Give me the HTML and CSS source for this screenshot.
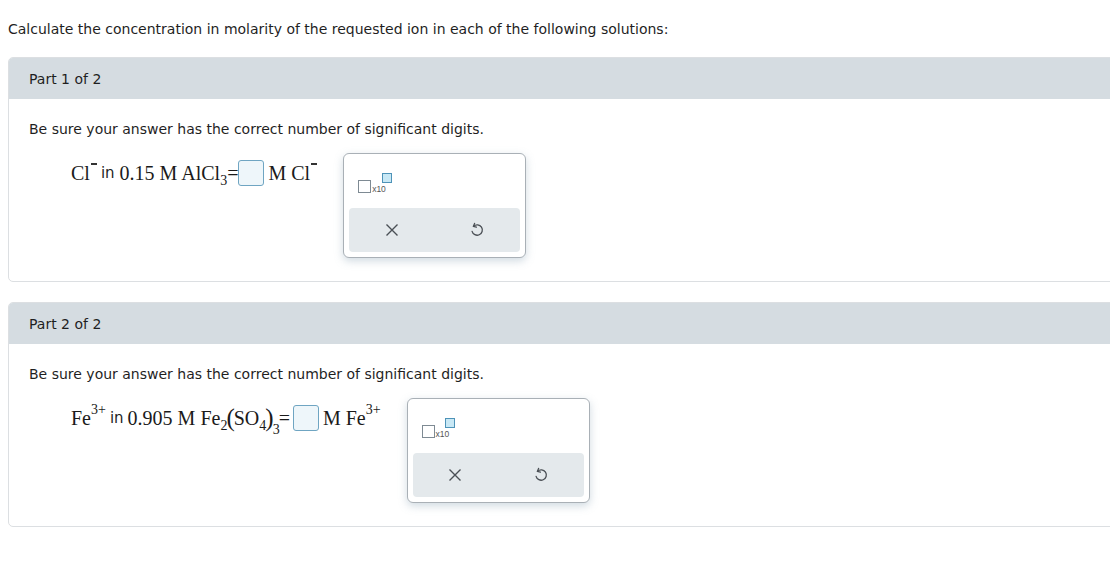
FILE: index.html
```html
<!DOCTYPE html>
<html>
<head>
<meta charset="utf-8">
<link rel="stylesheet" href="styles.css">
</head>
<body>
<p class="intro">Calculate the concentration in molarity of the requested ion in each of the following solutions:</p>

<section class="card">
  <div class="card-head">Part 1 of 2</div>
  <div class="card-body">
    <p class="note">Be sure your answer has the correct number of significant digits.</p>
    <div class="row">
      <div class="eq eq1">
        <span class="ser">Cl<span class="bar"></span></span>
        <span class="in">in</span>
        <span class="ser">0.15 M AlCl<sub>3</sub></span>
        <span class="ser eqs">=</span>
        <span class="box"></span>
        <span class="ser">M Cl<span class="bar"></span></span>
      </div>
      <div class="pop">
        <div class="tool">
          <span class="tsq"></span><span class="tx">x10</span><span class="tsup"></span>
        </div>
        <div class="btns">
          <span class="btn"><svg width="16" height="16" viewBox="0 0 16 16"><path d="M2.5 2.5L13.5 13.5M13.5 2.5L2.5 13.5" stroke="#4a4f55" stroke-width="1.4" fill="none"/></svg></span>
          <span class="btn"><svg width="16" height="16" viewBox="0 0 16 16"><path d="M4.6 4.2A5.2 5.2 0 1 1 3.1 9.3" stroke="#4a4f55" stroke-width="1.3" fill="none" stroke-linecap="round"/><path d="M5.6 1.4L4.3 4.4L7.4 5.2" stroke="#4a4f55" stroke-width="1.3" fill="none" stroke-linecap="round" stroke-linejoin="round"/></svg></span>
        </div>
      </div>
    </div>
  </div>
</section>

<section class="card">
  <div class="card-head">Part 2 of 2</div>
  <div class="card-body">
    <p class="note">Be sure your answer has the correct number of significant digits.</p>
    <div class="row">
      <div class="eq eq2">
        <span class="ser">Fe<sup class="chg">3+</sup></span>
        <span class="in">in</span>
        <span class="ser">0.905 M Fe<sub>2</sub><span class="par">(</span>SO<sub>4</sub><span class="par">)</span><sub class="s3">3</sub></span>
        <span class="ser eqs">=</span>
        <span class="box"></span>
        <span class="ser">M Fe<sup class="chg">3+</sup></span>
      </div>
      <div class="pop">
        <div class="tool">
          <span class="tsq"></span><span class="tx">x10</span><span class="tsup"></span>
        </div>
        <div class="btns">
          <span class="btn"><svg width="16" height="16" viewBox="0 0 16 16"><path d="M2.5 2.5L13.5 13.5M13.5 2.5L2.5 13.5" stroke="#4a4f55" stroke-width="1.4" fill="none"/></svg></span>
          <span class="btn"><svg width="16" height="16" viewBox="0 0 16 16"><path d="M4.6 4.2A5.2 5.2 0 1 1 3.1 9.3" stroke="#4a4f55" stroke-width="1.3" fill="none" stroke-linecap="round"/><path d="M5.6 1.4L4.3 4.4L7.4 5.2" stroke="#4a4f55" stroke-width="1.3" fill="none" stroke-linecap="round" stroke-linejoin="round"/></svg></span>
        </div>
      </div>
    </div>
  </div>
</section>
</body>
</html>
```

FILE: styles.css
```css
html, body {
  margin: 0;
  padding: 0;
  background: #fff;
  overflow: hidden;
}
body {
  padding: 0 0 0 8px;
  font-family: "DejaVu Sans", Verdana, sans-serif;
  font-size: 14px;
  color: #1f1f1f;
}
.intro {
  margin: 0;
  padding-top: 20px;
  height: 37px;
  line-height: 18px;
}
.card {
  margin-right: -20px;
  border: 1px solid #dcdfe2;
  border-radius: 5px;
  margin-bottom: 20px;
  overflow: hidden;
}
.card-head {
  background: #d5dce1;
  height: 41px;
  line-height: 43px;
  padding-left: 20px;
}
.card-body {
  padding: 20px 20px 23px 20px;
}
.note {
  margin: 0;
  line-height: 20px;
}
.row {
  display: flex;
  align-items: flex-start;
  gap: 26px;
  margin-top: 14px;
  padding-left: 42px;
}
.eq {
  display: flex;
  align-items: center;
  margin-top: 7px;
  height: 26px;
  white-space: nowrap;
}
.ser {
  font-family: "Liberation Serif", "Times New Roman", serif;
  font-size: 20px;
  color: #1a1a1a;
}
.in {
  font-size: 15px;
  margin: 0 5px 0 4px;
}
.eq2 .in {
  margin: 0 4px 0 4px;
}
sub {
  font-size: 14px;
  vertical-align: -5px;
  line-height: 0;
}
.bar {
  display: inline-block;
  width: 6px;
  height: 1.5px;
  background: #333;
  vertical-align: 15px;
  margin-left: 1px;
}
sup.chg {
  font-size: 14px;
  vertical-align: 11px;
  line-height: 0;
}
.par {
  font-size: 25px;
  vertical-align: -1px;
  line-height: 0;
  display: inline-block;
  margin: 0 -1px;
}
sub.s3 {
  vertical-align: -9px;
}
.eqs {
  margin: 0;
}
.eq1 .box {
  margin-left: 0;
}
.eq2 .eqs {
  margin: 0 2px 0 -1px;
}
.box {
  display: inline-block;
  width: 24px;
  height: 24px;
  border: 1px solid #6fa5c2;
  border-radius: 3px;
  background: #eef6fa;
  margin: 0 4px 0 1px;
}
.pop {
  flex: none;
  width: 183px;
  height: 105px;
  border: 1px solid #a9b0b6;
  border-radius: 6px;
  box-shadow: 0 3px 8px rgba(120, 150, 170, 0.35);
  padding: 0 5px;
  box-sizing: border-box;
  display: flex;
  flex-direction: column;
  background: #fff;
}
.tool {
  height: 54px;
  display: flex;
  align-items: flex-end;
  padding-left: 9px;
  padding-bottom: 15px;
  box-sizing: border-box;
}
.tsq {
  display: inline-block;
  width: 11px;
  height: 11px;
  border: 1.5px solid #7e8a93;
}
.tx {
  font-family: "Liberation Sans", Arial, sans-serif;
  font-size: 8.5px;
  color: #555;
  line-height: 8px;
  margin-left: 1px;
}
.tsup {
  display: inline-block;
  width: 8px;
  height: 8px;
  border: 1.5px solid #4e93b8;
  background: #c8e8f5;
  margin-bottom: 10px;
  margin-left: -4px;
}
.btns {
  height: 44px;
  background: #e4e9ec;
  border-radius: 4px;
  display: flex;
  align-items: center;
}
.btn {
  flex: 1;
  display: flex;
  justify-content: center;
}
```
